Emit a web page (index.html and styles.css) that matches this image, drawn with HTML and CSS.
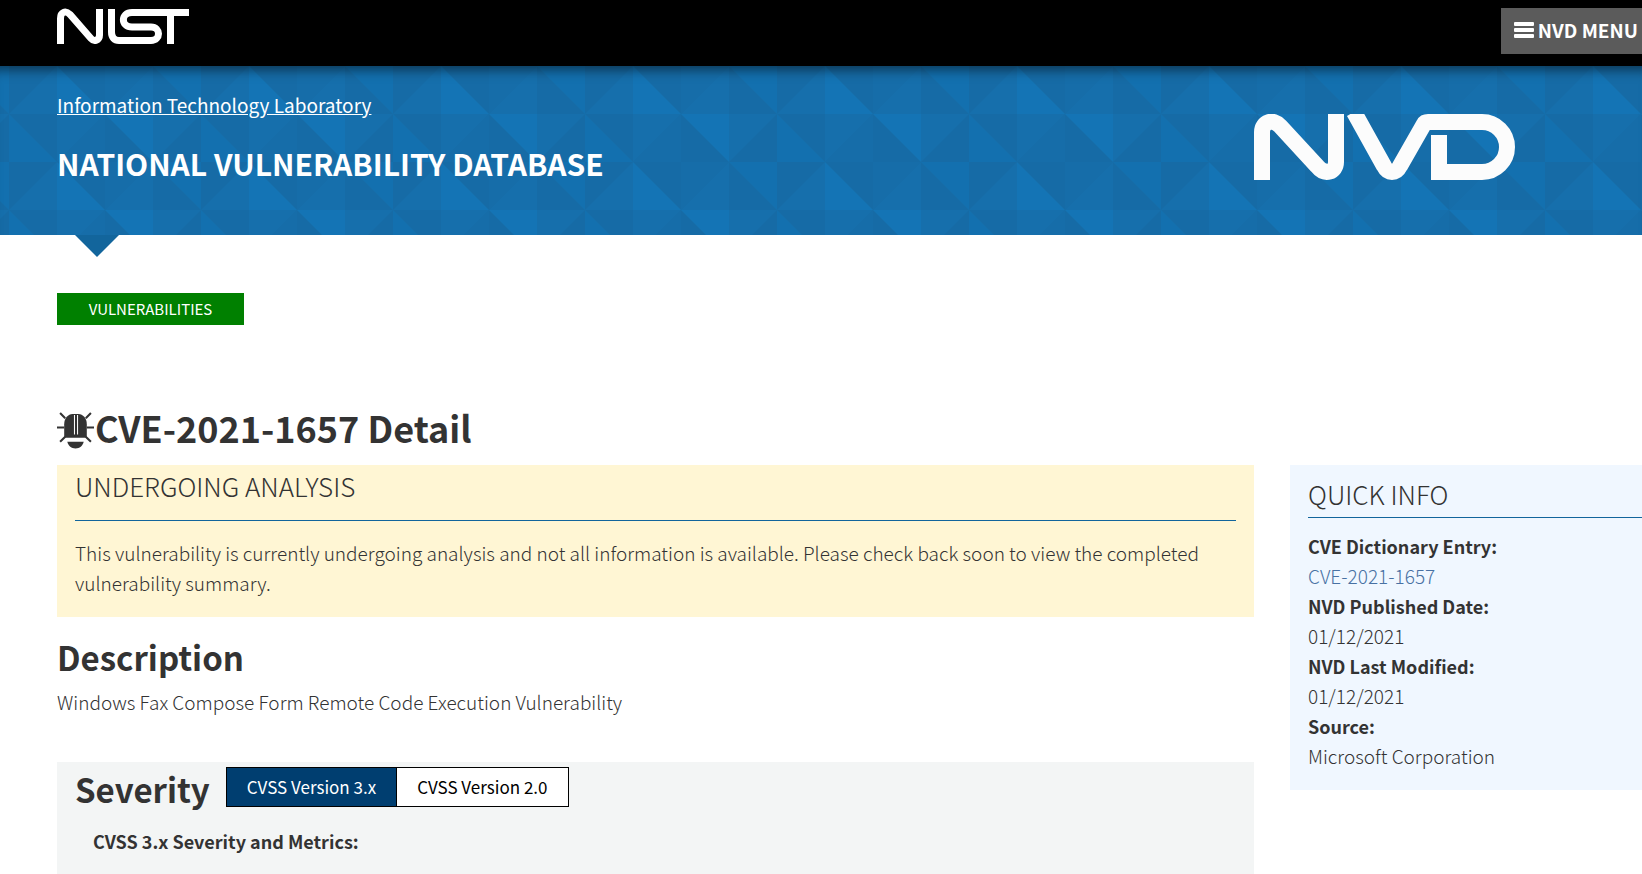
FILE: index.html
```html
<!DOCTYPE html>
<html lang="en">
<head>
    <meta charset="UTF-8">
    <meta name="viewport" content="width=device-width, initial-scale=1.0">
    <title>NVD - CVE-2021-1657</title>
    <link rel="stylesheet" href="styles.css">
</head>
<body>

<!-- Top bar -->
<header class="topbar">
    <a href="#" class="nist-logo" aria-label="NIST">
        <svg width="132" height="36" viewBox="0 0 132 36" fill="none" stroke="#fff" stroke-width="7">
            <path d="M3.500 36V10.500C3.500 4 8.500 2 13 6.500L34 30.500C37 34 42.500 32.500 42.500 27V1"/>
            <path d="M54.500 1V24C54.500 29.500 57.500 32.500 62 32.500H94C104 32.500 104 19 94 19H75C63.500 19 63.500 4.500 75 4.500H132"/>
            <path d="M113.500 4.500V36"/>
        </svg>
    </a>
    <button type="button" class="menu-btn">
        <svg width="20" height="16" viewBox="0 0 20 16" fill="#fff">
            <rect width="20" height="4" rx="1"/>
            <rect y="6" width="20" height="4" rx="1"/>
            <rect y="12" width="20" height="4" rx="1"/>
        </svg>
        NVD MENU
    </button>
</header>

<!-- Banner -->
<div class="banner">
    <svg class="banner-pattern" width="100%" height="100%" aria-hidden="true">
        <defs>
            <pattern id="triangles" x="57" y="0" width="192" height="96" patternUnits="userSpaceOnUse">
                <rect width="192" height="96" fill="#166ba6"/>
                <path d="M0 0L48 48H0Z" fill="#1474b5"/>
                <path d="M96 0H144V48Z" fill="#1370af"/>
                <path d="M48 48H96V0Z" fill="#166fac"/>
                <path d="M48 0H96L48 48Z" fill="#166da9"/>
                <path d="M144 48H192V0Z" fill="#166fac"/>
                <path d="M0 48H48L0 96Z" fill="#166fac"/>
                <path d="M0 96H48V48Z" fill="#166da9"/>
                <path d="M48 48H96V96Z" fill="#1474b5"/>
                <path d="M96 48H144L96 96Z" fill="#166fac"/>
                <path d="M144 48L192 96H144Z" fill="#1370af"/>
            </pattern>
        </defs>
        <rect width="100%" height="100%" fill="url(#triangles)"/>
    </svg>
    <div class="banner-text">
        <a href="#" class="lab-link">Information Technology Laboratory</a>
        <a href="#" class="site-title">NATIONAL VULNERABILITY DATABASE</a>
    </div>
    <svg class="nvd-logo" role="img" aria-label="NVD" width="262" height="66" viewBox="0 0 262 66" fill="none" stroke="#fcfcfc" stroke-width="16">
        <path d="M8 66V18C8 8 19 4 26 12L63 52C71 62 82 58 82 48V0"/>
        <path d="M100 -2L130 52C134 60 142 60 146 52L170 10Q171 8 174 8H228A25 25 0 0 1 228 58H185V21"/>
    </svg>
</div>

<main class="content">
    <a href="#" class="tag">VULNERABILITIES</a>

    <h1>
        <svg width="37" height="37" viewBox="0 0 36 36" fill="#333">
            <path d="M7 25V12C7 6 11 2 15 2H21C25 2 29 6 29 12V25Z"/>
            <path d="M10 29H26C25 33 22 35.500 18 35.500C14 35.500 11 33 10 29Z"/>
            <path d="M3 1L8 6M33 1L28 6M0 15H7M29 15H36M3 29L8 24M33 29L28 24" stroke="#333" stroke-width="2"/>
            <path d="M17 3V22M20 3V22" stroke="#fff" stroke-width="1"/>
        </svg>CVE-2021-1657 Detail
    </h1>

    <div class="row">
        <div class="main-col">
            <section class="notice">
                <h2>UNDERGOING ANALYSIS</h2>
                <p>This vulnerability is currently undergoing analysis and not all information is available. Please check back soon to view the completed vulnerability summary.</p>
            </section>

            <h3>Description</h3>
            <p class="description">Windows Fax Compose Form Remote Code Execution Vulnerability</p>

            <section class="severity">
                <div class="severity-head">
                    <h3>Severity</h3>
                    <div class="versions">
                        <button type="button" class="active">CVSS Version 3.x</button>
                        <button type="button">CVSS Version 2.0</button>
                    </div>
                </div>
                <strong class="metrics">CVSS 3.x Severity and Metrics:</strong>
            </section>
        </div>

        <!-- Quick Info -->
        <aside class="quick-info">
            <h2>QUICK INFO</h2>
            <dl>
                <dt>CVE Dictionary Entry:</dt>
                <dd><a href="#">CVE-2021-1657</a></dd>
                <dt>NVD Published Date:</dt>
                <dd>01/12/2021</dd>
                <dt>NVD Last Modified:</dt>
                <dd>01/12/2021</dd>
                <dt>Source:</dt>
                <dd>Microsoft Corporation</dd>
            </dl>
        </aside>
    </div>
</main>

</body>
</html>
```
FILE: styles.css
```css
* {
    box-sizing: border-box;
}

body {
    font-family: 'Noto Sans CJK SC', 'Noto Sans', sans-serif;
    font-size: 19px;
    font-weight: 300;
    line-height: 30px;
    margin: 0;
    color: #333;
    background-color: #fff;
    overflow: hidden;
}

h1, h2, h3, p, dl, dd {
    margin: 0;
}

.topbar {
    display: flex;
    justify-content: space-between;
    align-items: flex-start;
    height: 66px;
    padding: 8px 0 0 57px;
    background-color: #000;
}

.nist-logo svg {
    display: block;
}

.menu-btn {
    display: flex;
    align-items: center;
    gap: 4px;
    height: 46px;
    padding: 0 4px 3px 13px;
    border: none;
    background-color: #5b5b5b;
    color: #fff;
    font-family: inherit;
    font-size: 19px;
    font-weight: 700;
    cursor: pointer;
}

.banner {
    position: relative;
    display: flex;
    justify-content: space-between;
    padding: 24px 126px 52px 57px;
    box-shadow: inset 0 14px 12px -10px rgba(0, 0, 0, 0.5);
}

.banner-pattern {
    position: absolute;
    inset: 0;
    z-index: -1;
}

/* arrow under the banner */
.banner::after {
    content: "";
    position: absolute;
    left: 75px;
    top: 100%;
    border: 22px solid transparent;
    border-top-color: #12659c;
    border-bottom: none;
}

.banner-text {
    display: flex;
    flex-direction: column;
    gap: 23px;
    color: #fff;
}

.lab-link {
    color: #fff;
    font-size: 19px;
    font-weight: 400;
}

.site-title {
    color: #fff;
    font-size: 30px;
    font-weight: 700;
    line-height: 40px;
    text-decoration: none;
}

.nvd-logo {
    margin-top: 24px;
}

.content {
    padding: 58px 0 0 57px;
}

.tag {
    display: block;
    width: 187px;
    margin-bottom: 72px;
    background-color: #008000;
    color: #fff;
    font-size: 15px;
    font-weight: 400;
    line-height: 32px;
    text-align: center;
    text-decoration: none;
}

h1 {
    display: flex;
    align-items: center;
    gap: 1px;
    margin-bottom: 8px;
    font-size: 36px;
    font-weight: 700;
    line-height: 60px;
}

h1 svg {
    margin-top: 6px;
}

h2 {
    padding-bottom: 2px;
    font-size: 26px;
    font-weight: 300;
    line-height: 42px;
    border-bottom: 1px solid #12659c;
}

h3 {
    font-size: 33px;
    font-weight: 700;
    line-height: 46px;
}

.row {
    display: flex;
    align-items: flex-start;
    gap: 36px;
}

.main-col {
    flex: 1;
}

.notice {
    margin-bottom: 17px;
    padding: 0 18px 19px;
    background-color: #fff6d4;
}

.notice h2 {
    margin-bottom: 17px;
    padding-bottom: 13px;
}

.description {
    margin: 7px 0 45px;
}

.severity {
    padding: 4px 18px 18px;
    background-color: #f3f5f5;
}

.severity-head {
    display: flex;
    align-items: center;
    gap: 16px;
    margin-bottom: 14px;
}

.versions {
    display: flex;
    margin-bottom: 4px;
    border: 1px solid #000;
}

.versions button {
    height: 38px;
    padding: 0 20px 2px;
    border: none;
    background-color: #fff;
    color: #000;
    font-family: inherit;
    font-size: 17px;
    font-weight: 400;
    cursor: pointer;
}

.versions .active {
    border-right: 1px solid #000;
    background-color: #003e70;
    color: #fff;
}

.metrics {
    padding-left: 18px;
    font-size: 18px;
    font-weight: 700;
}

.quick-info {
    width: 352px;
    padding: 8px 0 19px 18px;
    background-color: #f0f7ff;
}

.quick-info h2 {
    margin-bottom: 13px;
}

dt {
    font-size: 18px;
    font-weight: 700;
}

dd a {
    color: #4871a3;
    text-decoration: none;
}
```
